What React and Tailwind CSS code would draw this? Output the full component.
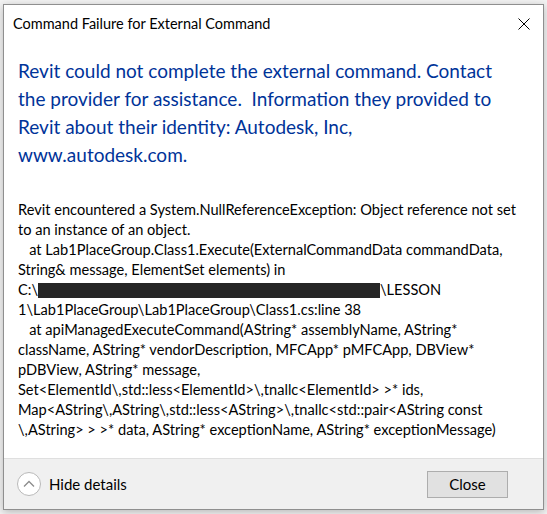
import React from "react";

const bodyLines = [
  "Revit encountered a System.NullReferenceException: Object reference not set",
  "to an instance of an object.",
  "\u00a0\u00a0\u00a0at Lab1PlaceGroup.Class1.Execute(ExternalCommandData commandData,",
  "String& message, ElementSet elements) in",
  null,
  "1\\Lab1PlaceGroup\\Lab1PlaceGroup\\Class1.cs:line 38",
  "\u00a0\u00a0\u00a0at apiManagedExecuteCommand(AString* assemblyName, AString*",
  "className, AString* vendorDescription, MFCApp* pMFCApp, DBView*",
  "pDBView, AString* message,",
  "Set<ElementId\\,std::less<ElementId>\\,tnallc<ElementId> >* ids,",
  "Map<AString\\,AString\\,std::less<AString>\\,tnallc<std::pair<AString const",
  "\\,AString> > >* data, AString* exceptionName, AString* exceptionMessage)",
];

export default function App() {
  return (
    <div
      className="w-[547px] h-[514px] bg-[#f3f3f3] pt-[4px] pl-[3px] overflow-hidden"
      style={{ fontFamily: 'Lato, sans-serif' }}
    >
      <div className="w-[541px] h-[506px] border border-[#8f8f8f] bg-white flex flex-col shadow-[0_2px_8px_rgba(0,0,0,0.25)]">
        <div className="h-[38px] flex items-center justify-between pl-[9px] pr-[12px]">
          <span className="text-[14.5px] text-black">Command Failure for External Command</span>
          <svg width="12" height="12" viewBox="0 0 12 12" className="mr-[1px]">
            <path d="M0.5 0.5 L11.5 11.5 M11.5 0.5 L0.5 11.5" stroke="#000" strokeWidth="1" />
          </svg>
        </div>
        <div className="mt-[14px] pl-[14px] text-[19px] leading-[28px] text-[#003399]">
          <div className="whitespace-nowrap">Revit could not complete the external command. Contact</div>
          <div className="whitespace-pre">the provider for assistance.  Information they provided to</div>
          <div className="whitespace-nowrap">Revit about their identity: Autodesk, Inc,</div>
          <div className="whitespace-nowrap">www.autodesk.com.</div>
        </div>
        <div className="mt-[31px] pl-[14px] text-[14.6px] leading-[20px] text-black">
          {bodyLines.map((l, i) =>
            l === null ? (
              <div key={i} className="flex items-center whitespace-nowrap">
                <span>C:\</span>
                <span className="inline-block w-[342px] h-[15px] bg-[#262626]" />
                <span>\LESSON</span>
              </div>
            ) : (
              <div key={i} className="whitespace-nowrap">{l}</div>
            )
          )}
        </div>
        <div className="mt-auto h-[51px] border-t border-[#dfdfdf] bg-[#f0f0f0] flex items-center justify-between pl-[13px] pr-[35px]">
          <div className="flex items-center gap-[8px]">
            <div className="w-[24px] h-[24px] rounded-full border border-[#b9b9b9] bg-white flex items-center justify-center">
              <svg width="12" height="8" viewBox="0 0 12 8">
                <path d="M1 6.5 L6 1.5 L11 6.5" fill="none" stroke="#8c8c8c" strokeWidth="1.3" />
              </svg>
            </div>
            <span className="text-[15px] text-black">Hide details</span>
          </div>
          <button className="w-[81px] h-[27px] bg-[#e1e1e1] border border-[#adadad] text-[15px] text-black flex items-center justify-center">
            Close
          </button>
        </div>
      </div>
    </div>
  );
}
